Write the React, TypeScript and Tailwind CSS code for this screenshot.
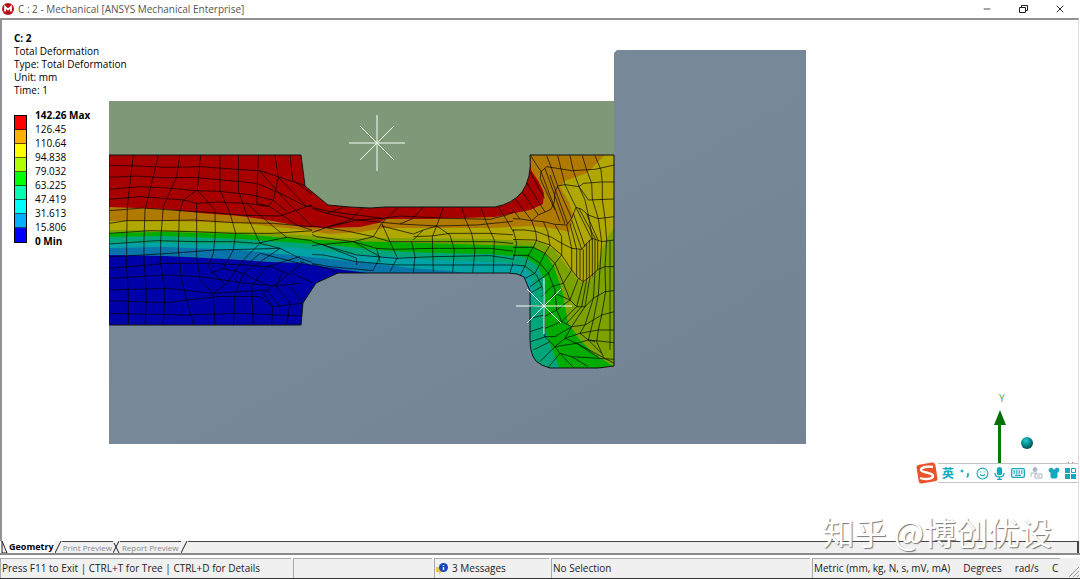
import { Minus, Shirt, Smile, X } from "lucide-react";

const legend = [
  { color: "bg-[#ff0000]", label: "126.45" },
  { color: "bg-[#ffb000]", label: "110.64" },
  { color: "bg-[#ffff00]", label: "94.838" },
  { color: "bg-[#b0ff00]", label: "79.032" },
  { color: "bg-[#00ff00]", label: "63.225" },
  { color: "bg-[#00ffb0]", label: "47.419" },
  { color: "bg-[#00ffff]", label: "31.613" },
  { color: "bg-[#00b0ff]", label: "15.806" },
  { color: "bg-[#0000ff]", label: "0 Min" },
];

const outline =
  "M109 155H301L305 186L328 205L350 207L370 208L385 207H495Q512 204 522 192Q532 178 530 155H614V366L598 368H550Q541 366 536 361Q530 354 530 340V291L524 277Q518 273 508 273H338L316 283L303 303L301 325H109Z";

// Each band covers its own level and everything below it.
const bands = [
  { fill: "#b07a00", d: "M109 207L165 209L200 213L240 216L267 220L305 227L325 228L360 227L378 223L386 219H430L495 217L510 214L530 210L543 204L544 193L539 182L531 170L530 155H614V380H109Z" },
  { fill: "#b0a800", d: "M109 221L165 221L240 223L267 226L305 230L330 234L360 232L385 228H490L530 226L550 228L570 232L573 215L569 202L560 187L565 181L587 173L605 155H614V380H109Z" },
  { fill: "#7ca200", d: "M109 230L165 230L240 232L300 235L340 238L390 238L490 239L540 242L555 250L565 264L578 280L586 283L596 272L602 250L608 236L614 228V380H109Z" },
  { fill: "#00ac00", d: "M109 233L165 232L240 234L300 239L340 241L390 242L490 245L532 246L546 255L554 267L562 290L568 323L580 340L593 353L613 366V380H109Z" },
  { fill: "#00a67a", d: "M109 237L165 236L240 239L300 243L340 246L390 251L433 253L490 254L525 257L538 266L545 282V325L549 342L560 369H109Z" },
  { fill: "#00a3a5", d: "M109 243L165 243L240 245L300 248L340 253L390 256L433 260L490 262L518 264L529 273L534 290L530 310H109Z" },
  { fill: "#0874a8", d: "M109 248L165 247L240 250L290 255L330 259L370 263L410 268L450 271L475 274L475 380H109Z" },
  { fill: "#0000a8", d: "M109 255L165 256L225 259L270 262L300 263L325 267L345 270L375 274V380H109Z" },
];

// Mesh patches are digitised at three times the viewport scale.
const patches = [
  {
    clip: "meshLeft",
    origin: "translate(100 140) scale(.33333)",
    d: `M28 76L110 78L200 82L300 80L410 88L480 92L540 112L620 138
      M28 112L110 108L200 114L280 112L410 124L470 130L530 155L620 200L680 196
      M28 148L120 140L200 144L290 152L360 154L450 164L520 180L560 215
      M28 178L120 170L200 176L250 180L290 190L350 186L440 190L510 200
      M28 212L130 204L240 212L340 218L430 226L540 228L630 196L700 202
      M28 250L80 242L180 242L280 240L400 248L520 250L610 258L660 262
      M28 280L150 272L280 275L400 280L520 280L640 272
      M28 312L170 302L290 305L400 305L470 310L560 292L660 305
      M28 350L130 345L240 338L340 330L430 328L540 325L600 355L660 375
      M28 385L200 370L330 370L440 375L520 382L570 405
      M28 415L200 405L300 410L440 430L530 438L600 430
      M28 450L200 445L340 460L500 450
      M28 482L200 488L350 470L480 470L518 500L605 490
      M28 520L250 525L420 520L605 528
      M100 45L90 130L82 200L80 300L80 380L85 460V556
      M175 45L155 130L135 210L132 300V360L140 470L135 556
      M240 45L230 110L190 200L182 300V370L195 460L190 556
      M302 45L292 150L250 180L238 220L235 330L245 420L260 480L282 556
      M360 45V150L390 220L407 280L400 330L370 385L330 400
      M292 150L345 210L346 280L340 340L325 380L370 430
      M415 45V150L440 225L480 310L430 360L380 430L340 460L345 556
      M475 45L470 190M440 190L520 260L560 292
      M525 45L535 112L520 180L505 198L470 190
      M570 45L578 120L680 196
      M478 92L560 185L640 262M535 112L620 200M510 200L590 255L650 275
      M290 190V350L300 420L340 460
      M400 556L405 465L430 400L540 325
      M460 556L455 440L500 380L600 350
      M515 556L518 500L490 460L570 400L610 365
      M560 556L570 490L530 440L545 400
      M480 310L540 325M440 375L480 340L600 370
      M610 490L570 440M640 430L580 400M700 398L600 365
      M500 450L540 500M370 385L430 400L500 435`,
  },
  {
    clip: "meshMiddle",
    origin: "translate(290 90) scale(.33333)",
    d: `M40 346L120 365L280 385L330 378L480 385L600 388L650 375L720 345
      M-30 370L40 346L110 370L200 390L330 402L440 408L560 405L660 395L720 385
      M0 400L100 412L180 425L250 440L300 455H610L720 465
      M-10 400L80 440L190 455L260 475L310 478L430 475L600 475L720 490
      M-10 432L100 465L200 495L320 505L430 500L600 497L720 515
      M0 442L60 430L110 412L200 390L280 385
      M0 480L80 465L190 455L250 440L275 400L325 352
      M-10 490L100 495L200 515L320 525H660L700 535
      M35 515L120 530L250 542M0 515L60 520L140 545
      M370 450L400 420L440 408L480 435L493 480L488 548
      M370 440L425 438L480 430L600 430L680 435
      M275 400L300 455L322 503L300 545
      M400 352L370 385L330 402M275 408L370 432L400 420
      M460 352L440 408L427 440L430 545
      M515 352L525 385L545 430L555 480L548 548
      M573 352L590 400L613 450L610 548
      M625 350L650 390L678 440L675 500L660 548
      M370 548L375 500L365 455
      M220 352L180 390L110 412M160 352L110 370M190 455L270 500L250 540
      M100 465L200 505V525M260 475L270 515`,
  },
  {
    clip: "meshRight",
    origin: "translate(505 150) scale(.33333)",
    d: `M0 205L45 207L80 212L100 195L138 178L148 155L150 125L158 108L180 104L222 110L235 100L290 96H328
      M77 17L108 65L125 50L200 62L270 58L328 45
      M108 65L106 85L112 100L150 180
      M108 65L165 215M120 55L180 222M135 75L188 222M158 110L200 205
      M80 212L115 215L150 223L185 225L200 205L213 172L230 178L250 195L280 206L328 200
      M222 110L240 135L250 150L328 147
      M0 240H60L95 245L140 262L170 280L200 295L230 298L245 280L262 265L290 275L328 270
      M205 190L240 290M213 172L262 270M222 175L272 268M245 193L280 272M200 210L230 298M195 220L215 298
      M0 268L90 270L135 285L170 315L200 360L220 385L235 395L255 380L280 358L300 350H328
      M0 292H85L120 310L150 340L175 400L195 450L215 470H240L265 445L300 425L328 422
      M0 316H70L105 340L130 370L150 420L155 480L170 515L200 530L240 525L290 495L328 485
      M0 342L60 348L95 375L115 420L120 560L150 590L215 580L250 570L328 578
      M150 590L180 565L225 550L280 540H328
      M150 590L165 610L200 620L328 628
      M75 430L110 410M75 470L118 465M75 505L118 495M75 545L120 530M77 575L122 560M85 600L135 575M105 635L150 590M130 652L165 610
      M10 160L45 207M30 145L80 212M48 120L100 195M63 95L120 186M75 65L118 145
      M5 205L25 240L35 280L28 316L20 345L15 370
      M80 212L92 245L95 270L85 292L70 316L60 348L45 378
      M115 215L128 245L135 285L120 310L105 340L90 370L60 385
      M150 223L170 260V315L150 340L130 370L75 410
      M185 225L200 295V360L175 400L140 410L110 440
      M195 450L150 430L118 470M155 480L118 500M170 515L120 535M200 530L150 560L120 560
      M125 17L138 50L158 108M158 17L180 104L213 172
      M195 17L205 62L222 110L240 150L250 195L262 265V380
      M232 17L245 60L260 100L262 147L280 206L290 275L285 355
      M270 17L288 60L292 100V150L300 205L305 270L300 350L302 425L290 495L280 540L275 575L295 620
      M215 298V380M225 298V388M235 298V395M245 280V390M253 270V382M270 268V368M278 272V360M315 272V600
      M235 395L215 470L170 515M255 380L240 470L200 530L180 565
      M270 368L265 445L240 525L225 550M285 355L280 435L265 510L250 570L270 575
      M220 385L195 450L155 480M245 390L230 470L185 520
      M225 550L250 570L290 610M180 565L215 580L280 622
      M165 610L205 652M200 620L250 650M328 640L215 580`,
  },
];

function Marker({ x, y }: { x: number; y: number }) {
  return (
    <g transform={`translate(${x} ${y})`} stroke="#f4fff4" strokeWidth="1">
      <path d="M-28 0H28M0 -28V28M-17 -17L17 17M-17 17L17 -17" />
    </g>
  );
}

function DeformationPlot() {
  return (
    <svg className="w-[697px] shrink-0" viewBox="109 50 697 394" role="img" aria-label="Total deformation plot">
      <defs>
        <clipPath id="part">
          <path d={outline} />
        </clipPath>
        <clipPath id="meshLeft">
          <rect x="109" y="150" width="203" height="180" />
        </clipPath>
        <clipPath id="meshMiddle">
          <rect x="312" y="150" width="201" height="180" />
        </clipPath>
        <clipPath id="meshRight">
          <rect x="513" y="150" width="102" height="222" />
        </clipPath>
        <linearGradient id="steel" x1="0" y1="0" x2="1" y2="1">
          <stop offset="0" stopColor="#798b9c" />
          <stop offset="1" stopColor="#748494" />
        </linearGradient>
      </defs>
      <rect x="109" y="101" width="506" height="180" fill="#7f9878" />
      <path d="M614 53L617 50H806V444H109V240H614Z" fill="url(#steel)" />
      <g clipPath="url(#part)">
        <path d={outline} fill="#a80000" />
        {bands.map((band) => (
          <path key={band.fill} d={band.d} fill={band.fill} />
        ))}
        {patches.map((patch) => (
          <g key={patch.clip} clipPath={`url(#${patch.clip})`}>
            <path
              d={patch.d}
              transform={patch.origin}
              fill="none"
              stroke="#000"
              strokeOpacity=".75"
              strokeWidth="2.7"
            />
          </g>
        ))}
      </g>
      <path d={outline} fill="none" stroke="#111" strokeWidth="1" />
      <Marker x={377} y={143} />
      <Marker x={544} y={306} />
    </svg>
  );
}

function Triad() {
  return (
    <svg className="absolute -right-0.5 top-[352px] h-[100px] w-[100px]" viewBox="980 372 100 100" aria-hidden="true">
      <defs>
        <radialGradient id="ball" cx=".4" cy=".3" r=".7">
          <stop offset="0" stopColor="#30c8cc" />
          <stop offset=".5" stopColor="#009298" />
          <stop offset="1" stopColor="#004d52" />
        </radialGradient>
      </defs>
      <text x="999" y="402" fontSize="10" fill="#4ba34b">
        Y
      </text>
      <path d="M998 422H1001V466H998Z" fill="#087a08" />
      <path d="M1000 410L1006 425H994Z" fill="#087008" />
      <circle cx="1027" cy="443" r="6" fill="url(#ball)" />
      <path d="M1068 462L1073 467M1073 462L1068 467" stroke="#d66" />
    </svg>
  );
}

function InputToolbar() {
  return (
    <div className="absolute right-0 top-[442px] flex h-[22px] items-center text-[#12a9bd]">
      <svg className="h-[22px] w-[22px] shrink-0" viewBox="0 0 22 22" aria-hidden="true">
        <rect x="1.5" y="1.5" width="19" height="19" rx="3" fill="#e9532c" transform="rotate(-9 11 11)" />
        <path
          d="M17 5C12 4 5 5 5 8C5 11 17 10 17 14C17 17 9 18 4 16"
          fill="none"
          stroke="#fff"
          strokeWidth="2.4"
        />
      </svg>
      <div className="flex h-5 w-[140px] items-center justify-between border-y border-[#c4c4c4] bg-white pl-1 pr-0.5">
        <button className="font-['Noto_Sans_CJK_SC',sans-serif] text-xs font-bold leading-none">英</button>
        <button aria-label="Punctuation">
          <svg width="12" height="12" viewBox="0 0 12 12" fill="none" stroke="currentColor">
            <circle cx="3" cy="4" r="1" fill="currentColor" />
            <path d="M9 6V8Q9 10 7.5 10" strokeWidth="1.6" />
          </svg>
        </button>
        <button aria-label="Emoji"><Smile size={13} strokeWidth={2} /></button>
        <button aria-label="Voice input">
          <svg width="11" height="13" viewBox="0 0 11 13" fill="none" stroke="currentColor" strokeWidth="1.3">
            <rect x="3.5" y="0.7" width="4" height="7" rx="2" fill="currentColor" />
            <path d="M1 6Q1 10 5.5 10Q10 10 10 6M5.5 10V12.5M3 12.4H8" />
          </svg>
        </button>
        <button aria-label="Keyboard">
          <svg width="14" height="10" viewBox="0 0 14 10" fill="none" stroke="currentColor" strokeWidth="1.3">
            <rect x="0.7" y="0.7" width="12.6" height="8.6" rx="1" />
            <path d="M2.5 3H11.5M2.5 5H11.5" strokeDasharray="1.5 1" />
            <path d="M4 7.3H10" />
          </svg>
        </button>
        <button aria-label="Account" className="text-[#aab4c6]">
          <svg width="13" height="12" viewBox="0 0 13 12" fill="none" stroke="currentColor">
            <circle cx="5" cy="2.5" r="2" fill="currentColor" />
            <path d="M1 10V6H7M5 7H12V11H5ZM7 9H10" />
          </svg>
        </button>
        <button aria-label="Skin"><Shirt size={12} fill="currentColor" /></button>
        <button aria-label="Toolbox">
          <svg width="11" height="11" viewBox="0 0 11 11" fill="currentColor">
            <path d="M0 0H5V5H0ZM0 6H5V11H0ZM6 6H11V11H6Z" />
            <path d="M6.5 .5H10.5V4.5H6.5Z" fill="none" stroke="currentColor" />
          </svg>
        </button>
      </div>
    </div>
  );
}

function TitleBar() {
  return (
    <header className="flex h-[18px] items-center pl-[2px] pr-[14px]">
      <svg className="h-3 w-3" viewBox="0 0 12 12" aria-hidden="true">
        <circle cx="6" cy="6" r="6" fill="#b5121b" />
        <path d="M3 8.5V4L6 6.5L9 4V8.5" fill="none" stroke="#fff" strokeWidth="1.8" />
      </svg>
      <h1 className="ml-1 text-[10px] text-[#555]">C : 2 - Mechanical [ANSYS Mechanical Enterprise]</h1>
      <div className="ml-auto flex items-center gap-[26px] text-[#222]">
        <button aria-label="Minimize"><Minus size={10} /></button>
        <button aria-label="Restore">
          <svg width="10" height="10" viewBox="0 0 10 10" fill="none" stroke="currentColor">
            <path d="M1.5 3.5H7.5V8.5H1.5ZM3.5 3.5V1.5H9.5V6.5H7.5" />
          </svg>
        </button>
        <button aria-label="Close"><X size={12} strokeWidth={2} /></button>
      </div>
    </header>
  );
}

function Slant({ both = false }: { both?: boolean }) {
  return (
    <svg className="h-[13px] w-[7px] shrink-0" viewBox="0 0 7 13" fill="none" stroke="#222" aria-hidden="true">
      <path d={both ? "M0 12L6 0M1 2L6 12" : "M0 12L6 0"} />
    </svg>
  );
}

function ViewTabs() {
  return (
    <nav className="flex h-[14px] border-b-2 border-[#8a8a8a] bg-[#f0f0f0] text-[9px] leading-3">
      <div className="flex bg-white">
        <svg className="h-3 w-2" viewBox="0 0 8 12" aria-hidden="true">
          <path d="M2 0L7 12H2Z" fill="#f0f0f0" stroke="#222" />
        </svg>
        <button className="px-px font-bold">Geometry</button>
      </div>
      <Slant />
      <button className="border-t border-[#444] px-px text-[8px] leading-3 text-[#888]">Print Preview</button>
      <Slant both />
      <button className="border-t border-[#444] px-0.5 text-[8px] leading-3 text-[#888]">Report Preview</button>
      <Slant />
      <div className="mr-px flex-1 border-r-2 border-t border-[#444]" />
    </nav>
  );
}

function StatusBar() {
  const cell = "flex items-center whitespace-nowrap border-l border-t border-[#aaa] pl-px";
  return (
    <footer className="mt-[3px] flex h-[21px] gap-0.5 border-b border-[#333] bg-[#f0f0f0] text-[10px] text-[#222]">
      <div className={`${cell} w-[291px]`}>Press F11 to Exit | CTRL+T for Tree | CTRL+D for Details</div>
      <div className={`${cell} w-[139px]`} />
      <div className={`${cell} w-[115px]`}>
        <svg className="mr-1 h-3 w-3" viewBox="0 0 12 12" aria-hidden="true">
          <path d="M0 4H9V9H5L3 12V9H0Z" fill="#f2c14e" />
          <circle cx="7.5" cy="4.5" r="4.5" fill="#1743c4" />
          <path d="M7.5 2V3M7.5 4V7" stroke="#fff" strokeWidth="1.5" />
        </svg>
        3 Messages
      </div>
      <div className={`${cell} flex-1`}>No Selection</div>
      <div className={`${cell} w-[248px] gap-[13px]`}>
        <span>Metric (mm, kg, N, s, mV, mA)</span>
        <span>Degrees</span>
        <span>rad/s</span>
        <span>C</span>
      </div>
      <svg className="h-5 w-[18px] shrink-0" viewBox="0 0 18 20" stroke="#999" aria-hidden="true">
        <path d="M7 19L17 9M11 19L17 13M15 19L17 17" />
      </svg>
    </footer>
  );
}

export default function App() {
  return (
    <div className="relative flex h-screen flex-col overflow-hidden bg-white font-['Open_Sans','Noto_Sans_CJK_SC',sans-serif] text-black">
      <TitleBar />
      <main className="relative mr-px flex flex-1 overflow-hidden border-l-2 border-r border-t-2 border-[#929296] border-r-[#ddd]">
        <aside className="w-[107px] shrink-0 pl-3 pt-3">
          <div className="whitespace-nowrap text-[10px] leading-[13px]">
            <h2 className="font-bold">C: 2</h2>
            <p>Total Deformation</p>
            <p>Type: Total Deformation</p>
            <p>Unit: mm</p>
            <p>Time: 1</p>
          </div>
          <div className="mt-[11px] flex text-[10px] leading-[14px]">
            <div className="mt-[7px] w-[13px] self-start border border-black">
              {legend.map((entry) => (
                <div key={entry.label} className={`h-[14px] border-b border-black/60 last:border-b-0 ${entry.color}`} />
              ))}
            </div>
            <ul className="ml-2 whitespace-nowrap">
              <li className="font-bold">142.26 Max</li>
              {legend.map((entry) => (
                <li key={entry.label} className="last:font-bold">
                  {entry.label}
                </li>
              ))}
            </ul>
          </div>
        </aside>
        <div className="pt-[30px]">
          <DeformationPlot />
        </div>
        <Triad />
        <InputToolbar />
      </main>
      <ViewTabs />
      <StatusBar />
      <div className="pointer-events-none absolute bottom-6 right-7 whitespace-nowrap font-['Noto_Sans_CJK_SC',sans-serif] text-[32px] leading-[48px] text-white [text-shadow:1px_1px_1px_#777]">
        知乎 @博创优设
      </div>
    </div>
  );
}
